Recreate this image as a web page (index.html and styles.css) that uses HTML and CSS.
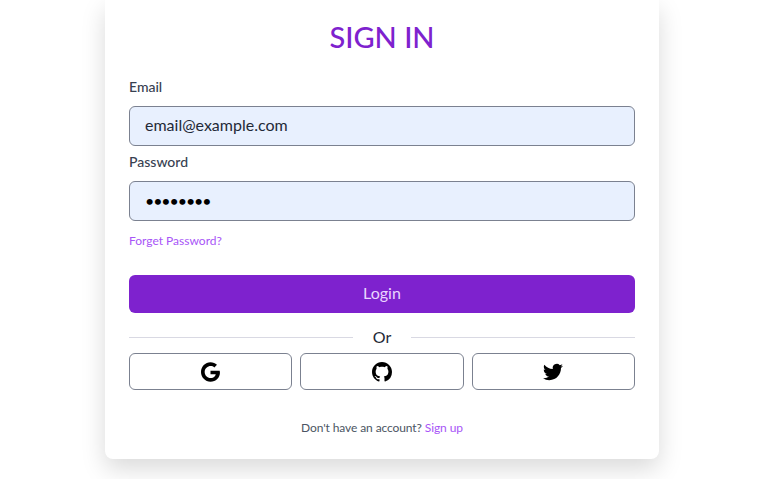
FILE: index.html
```html
<!DOCTYPE html>
<html lang="en">
<head>
  <meta charset="UTF-8">
  <meta name="viewport" content="width=device-width, initial-scale=1.0">
  <title>Sign in</title>
  <link rel="stylesheet" href="styles.css">
</head>
<body>
  <div class="card">
    <h1 class="title">SIGN IN</h1>
    <form class="form">
      <label class="label" for="email">Email</label>
      <input class="input" type="text" id="email" value="email@example.com">
      <label class="label label-password" for="password">Password</label>
      <input class="input input-password" type="password" id="password" value="password">
      <a class="forget" href="#">Forget Password?</a>
      <button class="login" type="button">Login</button>
    </form>
    <div class="divider">
      <span class="line"></span>
      <span class="or">Or</span>
      <span class="line"></span>
    </div>
    <div class="socials">
      <button class="social" type="button" aria-label="Google">
        <svg width="19" height="20" viewBox="0 0 488 512"><path d="M488 261.8C488 403.3 381.5 504 244 504 110.5 504 0 393.5 0 256S110.5 8 244 8c66.8 0 123 24.5 166.3 64.9l-67.5 64.9C258.5 52.6 94.3 116.6 94.3 256c0 86.5 69.1 156.6 149.7 156.6 93.5 0 128.6-67.1 134.1-101.8H244v-85.3h236.1c2.3 12.7 3.9 24.9 3.9 41.4z"/></svg>
      </button>
      <button class="social" type="button" aria-label="GitHub">
        <svg width="20" height="20" viewBox="0 0 16 16"><path d="M8 0C3.58 0 0 3.58 0 8c0 3.54 2.29 6.53 5.47 7.59.4.07.55-.17.55-.38 0-.19-.01-.82-.01-1.49-2.01.37-2.53-.49-2.69-.94-.09-.23-.48-.94-.82-1.13-.28-.15-.68-.52-.01-.53.63-.01 1.08.58 1.23.82.72 1.21 1.87.87 2.33.66.07-.52.28-.87.51-1.07-1.78-.2-3.64-.89-3.64-3.95 0-.87.31-1.59.82-2.15-.08-.2-.36-1.02.08-2.12 0 0 .67-.21 2.2.82.64-.18 1.32-.27 2-.27.68 0 1.36.09 2 .27 1.53-1.04 2.2-.82 2.2-.82.44 1.1.16 1.92.08 2.12.51.56.82 1.27.82 2.15 0 3.07-1.87 3.75-3.65 3.95.29.25.54.73.54 1.48 0 1.07-.01 1.93-.01 2.2 0 .21.15.46.55.38A8.013 8.013 0 0016 8c0-4.42-3.58-8-8-8z"/></svg>
      </button>
      <button class="social" type="button" aria-label="Twitter">
        <svg width="20" height="20" viewBox="0 0 24 24"><path d="M23.953 4.57a10 10 0 01-2.825.775 4.958 4.958 0 002.163-2.723c-.951.555-2.005.959-3.127 1.184a4.92 4.92 0 00-8.384 4.482C7.69 8.095 4.067 6.13 1.64 3.162a4.822 4.822 0 00-.666 2.475c0 1.71.87 3.213 2.188 4.096a4.904 4.904 0 01-2.228-.616v.06a4.923 4.923 0 003.946 4.827 4.996 4.996 0 01-2.212.085 4.936 4.936 0 004.604 3.417 9.867 9.867 0 01-6.102 2.105c-.39 0-.779-.023-1.17-.067a13.995 13.995 0 007.557 2.209c9.053 0 13.998-7.496 13.998-13.985 0-.21 0-.42-.015-.63A9.935 9.935 0 0024 4.59z"/></svg>
      </button>
    </div>
    <p class="footer">Don't have an account? <a class="signup" href="#">Sign up</a></p>
  </div>
</body>
</html>
```

FILE: styles.css
```css
* {
  box-sizing: border-box;
}

html, body {
  height: 100%;
}

body {
  margin: 0;
  background-color: #fff;
  font-family: "Lato", "Open Sans", sans-serif;
  overflow: hidden;
}

.card {
  width: 554px;
  height: 459px;
  margin: 0 0 0 105px;
  padding: 19px 24px 0;
  background-color: #fff;
  border-radius: 0 0 8px 8px;
  box-shadow: 0 10px 25px rgba(0, 0, 0, 0.15);
}

.title {
  margin: 0 0 22px;
  font-size: 29px;
  line-height: 36px;
  font-weight: 500;
  text-align: center;
  color: #7e22ce;
}

.form {
  display: flex;
  flex-direction: column;
}

.label {
  font-size: 14px;
  line-height: 20px;
  font-weight: 500;
  color: #374151;
  margin-bottom: 9px;
}

.label-password {
  margin-top: 6px;
}

.input {
  height: 40px;
  padding: 0 15px 3px;
  font-family: inherit;
  font-size: 16px;
  color: #1f2937;
  background-color: #e8f0fe;
  border: 1px solid #7b8190;
  border-radius: 6px;
}

.input-password {
  padding: 0 15px 1px;
  color: #000;
  letter-spacing: -1.1px;
}

.forget {
  margin-top: 12px;
  font-size: 12px;
  line-height: 16px;
  color: #a855f7;
  text-decoration: none;
}

.login {
  height: 38px;
  margin-top: 26px;
  padding-bottom: 4px;
  font-family: inherit;
  font-size: 16px;
  color: #e9d5ff;
  background-color: #7e22ce;
  border: none;
  border-radius: 6px;
}

.divider {
  display: flex;
  align-items: center;
  gap: 20px;
  margin-top: 14px;
}

.line {
  flex: 1;
  height: 1px;
  background-color: #d9d9e3;
}

.or {
  font-size: 16px;
  line-height: 20px;
  color: #1f2937;
}

.socials {
  display: grid;
  grid-template-columns: repeat(3, 1fr);
  gap: 8px;
  margin-top: 6px;
}

.social {
  display: flex;
  align-items: center;
  justify-content: center;
  height: 37px;
  padding: 0;
  background-color: #fff;
  border: 1px solid #7b8190;
  border-radius: 6px;
}

.footer {
  margin: 30px 0 0;
  font-size: 12px;
  line-height: 16px;
  letter-spacing: -0.1px;
  text-align: center;
  color: #4b5563;
}

.signup {
  color: #a855f7;
  text-decoration: none;
}
```
